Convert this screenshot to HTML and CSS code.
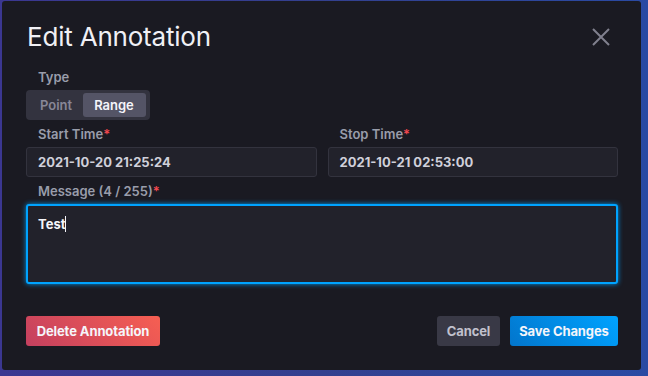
FILE: index.html
```html
<!DOCTYPE html>
<html lang="en">
<head>
  <meta charset="UTF-8">
  <meta name="viewport" content="width=device-width, initial-scale=1.0">
  <title>Edit Annotation</title>
  <link rel="stylesheet" href="styles.css">
</head>
<body>
  <div class="overlay">
    <section class="modal">
      <header class="modal-head">
        <h1>Edit Annotation</h1>
        <span class="close">
          <svg width="18" height="18" viewBox="0 0 18 18"><path d="M1 1L17 17M17 1L1 17" stroke="#80808e" stroke-width="2" fill="none"/></svg>
        </span>
      </header>

      <div class="field">
        <label class="lbl">Type</label>
        <div class="toggle">
          <span class="opt">Point</span>
          <span class="opt on">Range</span>
        </div>
      </div>

      <div class="row">
        <div class="field">
          <label class="lbl">Start Time<i>*</i></label>
          <div class="input">2021-10-20 21:25:24</div>
        </div>
        <div class="field">
          <label class="lbl">Stop Time<i>*</i></label>
          <div class="input">2021-10-21 02:53:00</div>
        </div>
      </div>

      <div class="field">
        <label class="lbl">Message (4 / 255)<i>*</i></label>
        <div class="textarea">Test<span class="caret"></span></div>
      </div>

      <footer class="modal-foot">
        <button class="btn del">Delete Annotation</button>
        <div class="right">
          <button class="btn cancel">Cancel</button>
          <button class="btn save">Save Changes</button>
        </div>
      </footer>
    </section>
  </div>
</body>
</html>
```

FILE: styles.css
```css
*{margin: 0px; padding: 0px; box-sizing: border-box;}
html, body{height: 100%;}
body{
  font-family: "Inter", "Roboto", sans-serif;
  background: linear-gradient(90deg, #3b3791 0%, #33408f 50%, #2a4aa3 100%);
  overflow: hidden;
}
.overlay{
  padding: 1px 7px 6px 2px;
}
.modal{
  width: 639px; height: 369px;
  background: #1a1a22;
  border-radius: 3px;
  padding: 20px 23px 24px 24px;
  display: flex;
  flex-direction: column;
}
.modal-head{
  display: flex;
  justify-content: space-between;
  align-items: center;
  height: 30px;
  margin: 0 0 17px 1px;
}
.modal-head h1{
  font-size: 26px;
  font-weight: 400;
  color: #f0f0f5;
  letter-spacing: -0.2px;
}
.close{
  display: flex;
  margin-right: 8px;
  margin-top: 2px;
}
.field{
  display: flex;
  flex-direction: column;
}
.row .field{flex: 1;}
.lbl{
  font-size: 13px;
  font-weight: 600;
  color: #999dab;
  padding-left: 12px;
  height: 18px;
  line-height: 18px;
  margin-bottom: 4px;
}
.lbl i{font-style: normal; color: #f5484f;}
.toggle{
  display: flex;
  align-self: flex-start;
  background: #33333f;
  border-radius: 4px;
  padding: 3px 4px 3px 3px;
  height: 30px;
  margin-bottom: 5px;
}
.opt{
  font-size: 13px;
  font-weight: 600;
  color: #878797;
  padding: 0 11px;
  line-height: 24px;
  border-radius: 3px;
}
.opt.on{background: #545466; color: #f5f5fa; padding: 0 12px 0 11px;}
.row{
  display: flex;
  gap: 11px;
  margin-bottom: 5px;
}
.input{
  height: 30px;
  background: #22222b;
  border: 1px solid #33333e;
  border-radius: 3px;
  font-size: 13px;
  font-weight: 700;
  color: #d0d0da;
  line-height: 28px;
  padding-left: 11px;
}
.textarea{
  height: 80px;
  background: #22222b;
  border: 2px solid #00a3ff;
  border-radius: 3px;
  box-shadow: 0 0 5px #0094e8;
  font-size: 13px;
  font-weight: 700;
  color: #f5f5fa;
  padding: 9px 10px;
  line-height: 18px;
}
.caret{
  display: inline-block;
  width: 1px; height: 16px;
  background: #f5f5fa;
  vertical-align: -3px;
}
.modal-foot{
  margin-top: auto;
  display: flex;
  justify-content: space-between;
  align-items: center;
}
.right{display: flex; gap: 10px;}
.btn{
  border: none;
  border-radius: 3px;
  height: 30px;
  padding: 0 8px;
  font-family: "Inter", "Roboto", sans-serif;
  font-size: 13px;
  font-weight: 700;
  color: #f5f5fa;
  white-space: nowrap;
  letter-spacing: -0.1px;
}
.del{background: linear-gradient(45deg, #c4405f 0%, #f65f52 100%); width: 134px;}
.cancel{background: #393946; color: #c1c1cd; width: 63px;}
.save{background: linear-gradient(45deg, #0275cc 0%, #00a3ff 100%); width: 108px;}
```
